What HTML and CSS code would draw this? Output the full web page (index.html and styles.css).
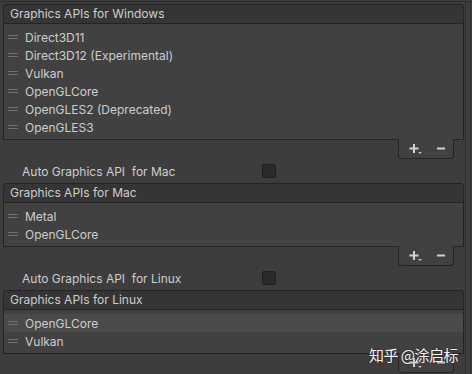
FILE: index.html
```html
<!doctype html>
<html lang="en">
<head>
	<meta charset="UTF-8">
	<title>Player Settings - Graphics APIs</title>
	<link rel="stylesheet" href="styles.css">
</head>
<body>
	<div class="inspector">
		<div class="content">
			<section class="rlist">
				<div class="rlist-header">Graphics APIs for Windows</div>
				<ul class="rlist-body">
					<li><span class="handle"></span>Direct3D11</li>
					<li><span class="handle"></span>Direct3D12 (Experimental)</li>
					<li><span class="handle"></span>Vulkan</li>
					<li><span class="handle"></span>OpenGLCore</li>
					<li><span class="handle"></span>OpenGLES2 (Deprecated)</li>
					<li><span class="handle"></span>OpenGLES3</li>
				</ul>
				<div class="rlist-footer">
					<span class="btn"><svg width="14" height="12" viewBox="0 0 14 12"><path d="M5 1v9M0.5 5.5h9" stroke="#d2d2d2" stroke-width="2"/><path d="M9 9h4l-2 2z" fill="#bcbcbc"/></svg></span>
					<span class="btn"><svg width="10" height="12" viewBox="0 0 10 12"><path d="M1 5.5h8" stroke="#d2d2d2" stroke-width="2"/></svg></span>
				</div>
			</section>

			<div class="toggle"><label>Auto Graphics API  for Mac</label><span class="checkbox"></span></div>

			<section class="rlist">
				<div class="rlist-header">Graphics APIs for Mac</div>
				<ul class="rlist-body">
					<li><span class="handle"></span>Metal</li>
					<li><span class="handle"></span>OpenGLCore</li>
				</ul>
				<div class="rlist-footer">
					<span class="btn"><svg width="14" height="12" viewBox="0 0 14 12"><path d="M5 1v9M0.5 5.5h9" stroke="#d2d2d2" stroke-width="2"/><path d="M9 9h4l-2 2z" fill="#bcbcbc"/></svg></span>
					<span class="btn"><svg width="10" height="12" viewBox="0 0 10 12"><path d="M1 5.5h8" stroke="#d2d2d2" stroke-width="2"/></svg></span>
				</div>
			</section>

			<div class="toggle"><label>Auto Graphics API  for Linux</label><span class="checkbox"></span></div>

			<section class="rlist">
				<div class="rlist-header">Graphics APIs for Linux</div>
				<ul class="rlist-body">
					<li class="selected"><span class="handle"></span>OpenGLCore</li>
					<li><span class="handle"></span>Vulkan</li>
				</ul>
				<div class="rlist-footer">
					<span class="btn"><svg width="14" height="12" viewBox="0 0 14 12"><path d="M5 1v9M0.5 5.5h9" stroke="#d2d2d2" stroke-width="2"/><path d="M9 9h4l-2 2z" fill="#bcbcbc"/></svg></span>
					<span class="btn"><svg width="10" height="12" viewBox="0 0 10 12"><path d="M1 5.5h8" stroke="#d2d2d2" stroke-width="2"/></svg></span>
				</div>
			</section>
			<div class="next-row"></div>
		</div>
		<div class="scrollbar"></div>
	</div>

	<div class="watermark">知乎 @涂启标</div>
</body>
</html>
```

FILE: styles.css
```css
body {
	margin: 0;
	height: 374px;
	overflow: hidden;
	background: #3d3d3d;
	color: #cdcdcd;
	font-family: Inter, "Noto Sans CJK SC", sans-serif;
	font-size: 12px;
}

.inspector { display: flex; margin-top: 1px; border-top: 1px solid #2c2c2c; }
.content { width: 461px; margin-left: 3px; padding-top: 2px; }
.scrollbar { width: 4px; margin-left: 1px; border-left: 1px solid #2e2e2e; border-right: 1px solid #2e2e2e; }

.rlist { display: flex; flex-direction: column; }
.rlist-header { height: 18px; line-height: 18px; padding-left: 6px; background: #353535; border: 1px solid #242424; border-radius: 3px 3px 0 0; }
.rlist-body { margin: 0; padding: 4px 0 3px; list-style: none; background: #414141; border: 1px solid #242424; border-top: 0; }
.rlist-body li { display: flex; align-items: center; height: 18px; }
.rlist-body li.selected { background: #4a4a4a; }
.handle { width: 10px; height: 2px; margin: 0 7px 0 4px; border-top: 1px solid #707070; border-bottom: 1px solid #707070; }

.rlist-footer { align-self: flex-end; display: flex; align-items: center; width: 54px; height: 19px; margin: -1px 10px 0 0; background: #414141; border: 1px solid #242424; border-top: 0; border-radius: 0 0 4px 4px; }
.btn { display: flex; justify-content: center; width: 25px; }
.btn:first-child { margin-left: 4px; }

.toggle { display: flex; align-items: center; height: 24px; padding-left: 19px; white-space: pre; }
.toggle label { width: 240px; }
.checkbox { width: 12px; height: 12px; background: #2b2b2b; border: 1px solid #1f1f1f; border-radius: 2px; }

.next-row { height: 2px; margin-top: 1px; border-top: 1px solid #2a2a2a; }

.watermark { position: absolute; left: 369px; top: 344px; color: #f4f4f4; font-size: 15px; font-family: "Noto Sans CJK SC", sans-serif; letter-spacing: -0.5px; text-shadow: 0 0 2px rgba(0, 0, 0, 0.6); }
```
